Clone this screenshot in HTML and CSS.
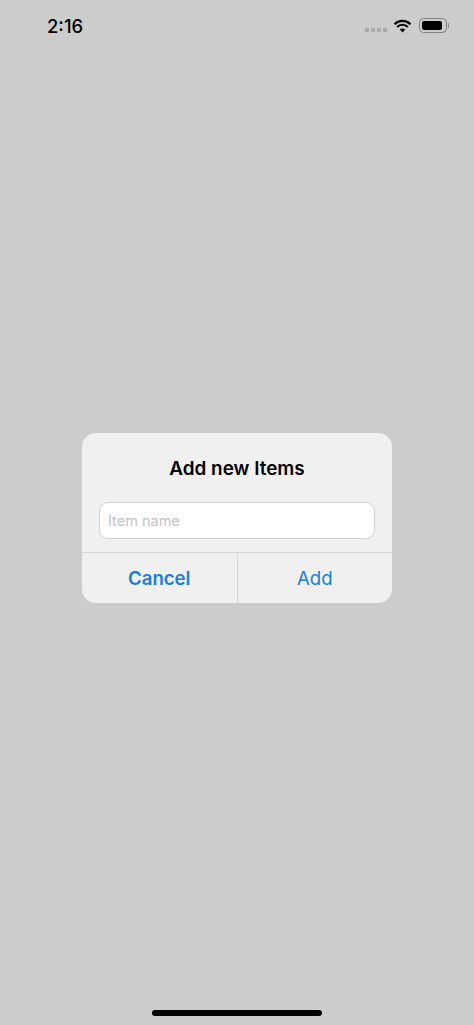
FILE: index.html
```html
<!DOCTYPE html>
<html lang="en">
<head>
<meta charset="utf-8">
<title>Add new Items</title>
<link rel="stylesheet" href="styles.css">
</head>
<body>
<div class="screen">
  <header class="status">
    <span class="time">2:16</span>
    <div class="status-icons">
      <div class="signal"><i></i><i></i><i></i><i></i></div>
      <svg class="wifi" viewBox="0 0 18 14" width="19" height="14" aria-hidden="true">
        <path d="M9 13.6 6.2 10.6a3.9 3.9 0 0 1 5.6 0Z" fill="#000"/>
        <path d="M1 5.2a11.4 11.4 0 0 1 16 0M3.6 8a7.6 7.6 0 0 1 10.8 0" fill="none" stroke="#000" stroke-width="2.2"/>
      </svg>
      <div class="battery"><div class="battery-fill"></div></div>
      <div class="battery-cap"></div>
    </div>
  </header>
  <main class="stage">
    <section class="dialog">
      <div class="dialog-body">
        <h1 class="title">Add new Items</h1>
        <div class="field">Item name</div>
      </div>
      <div class="actions">
        <div class="action action-bold">Cancel</div>
        <div class="action action-split">Add</div>
      </div>
    </section>
  </main>
  <footer class="home"><div class="home-bar"></div></footer>
</div>
</body>
</html>
```
FILE: styles.css
```css
* { box-sizing: border-box; }
html, body { margin: 0; height: 100%; }
body { background: #cccccc; font-family: Inter, "Liberation Sans", sans-serif; overflow: hidden; }
.screen { height: 1025px; display: flex; flex-direction: column; }

.status { height: 36px; padding: 16px 25px 0 47px; display: flex; align-items: center; justify-content: space-between; }
.time { font-size: 18.4px; font-weight: 500; line-height: 20px; color: #000; }
.status-icons { display: flex; align-items: center; }
.signal { display: flex; gap: 2px; margin-right: 6px; margin-top: 7px; }
.signal i { display: block; width: 4px; height: 4px; border-radius: 1px; background: #a8a8a8; }
.wifi { margin-right: 7px; margin-top: -1px; }
.battery { width: 28px; height: 15px; border: 1px solid #808080; border-radius: 4.5px; padding: 2px; margin-top: -1px; }
.battery-fill { width: 20px; height: 100%; background: #000; border-radius: 2px; }
.battery-cap { width: 1.5px; height: 5px; margin-left: 1px; margin-top: -1px; background: #888; border-radius: 0 1px 1px 0; }

.stage { flex: 1; display: flex; align-items: center; justify-content: center; }
.dialog { width: 310px; height: 170px; background: #f0f0f0; border-radius: 14px; display: flex; flex-direction: column; }
.dialog-body { flex: 1; padding: 24px 17px 0; }
.title { margin: 0; font-size: 18.9px; line-height: 24px; font-weight: 560; text-align: center; color: #000; }
.field { margin-top: 21px; height: 37px; padding: 0 8px; background: #fff; border: 1px solid #d3d3d3; border-radius: 9px; font-size: 14.5px; line-height: 35px; color: #c4c4c6; }
.actions { height: 51px; display: flex; border-top: 1px solid #d8d8d8; }
.action { flex: 1 1 0; display: flex; align-items: center; justify-content: center; font-size: 18.6px; color: #1a7de0; }
.action-bold { font-weight: 600; }
.action-split { border-left: 1px solid #d8d8d8; }

.home { height: 25px; padding-top: 10px; display: flex; justify-content: center; }
.home-bar { width: 170px; height: 6px; background: #000; border-radius: 3px; }
```
